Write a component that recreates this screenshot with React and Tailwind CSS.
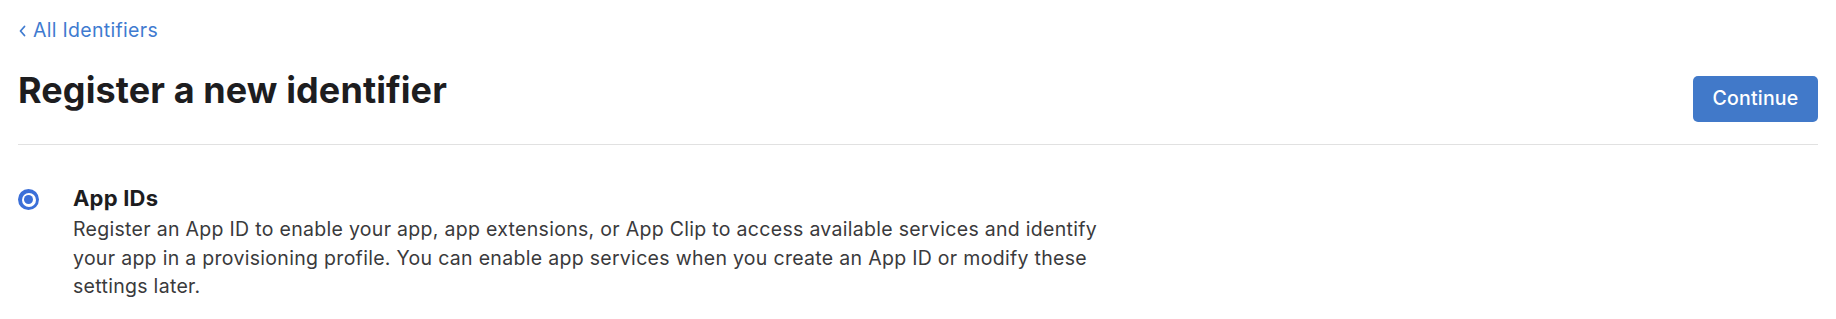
import React, { useState } from "react";

export default function App() {
  const [selected, setSelected] = useState("appids");

  return (
    <div className="min-h-screen bg-white px-[18px] font-['Inter','Liberation_Sans',sans-serif] text-[#1d1d1f]">
      {/* Back link */}
      <div className="pt-[16px]">
        <a href="#" className="inline-flex items-center gap-[6px] text-[19.5px] leading-[28px] tracking-[0.3px] text-[#3f7bd0]">
          <svg width="9" height="14" viewBox="0 0 9 14" fill="none" className="mt-[1px]">
            <path d="M6.5 2.5 2.5 7l4 4.5" stroke="currentColor" strokeWidth="1.8" strokeLinecap="round" strokeLinejoin="round" />
          </svg>
          All Identifiers
        </a>
      </div>

      {/* Header */}
      <div className="mt-[25px] flex items-start justify-between">
        <h1 className="text-[36px] font-bold leading-[43px] tracking-[0.1px] text-[#1d1d1f]">
          Register a new identifier
        </h1>
        <button className="mt-[7px] h-[46px] w-[125px] rounded-[5px] bg-[#4179c9] text-[19.5px] font-medium tracking-[0.2px] text-white">
          Continue
        </button>
      </div>

      <div className="mt-[22px] border-t border-[#e1e1e1]" />

      {/* Option */}
      <div className="mt-[40px] flex items-start">
        <button
          onClick={() => setSelected("appids")}
          className="mt-[4px] flex h-[21px] w-[21px] shrink-0 items-center justify-center rounded-full bg-[#3b6fd8]"
          aria-label="App IDs"
        >
          <span className="flex h-[14px] w-[14px] items-center justify-center rounded-full bg-white">
            {selected === "appids" && <span className="h-[9px] w-[9px] rounded-full bg-[#3b6fd8]" />}
          </span>
        </button>
        <div className="ml-[34px]">
          <h2 className="text-[22px] font-bold leading-[26px] tracking-[0.2px] text-[#1d1d1f]">App IDs</h2>
          <p className="mt-[4px] max-w-[1040px] text-[19.5px] leading-[28.5px] tracking-[0.3px] text-[#3a3a3c]">
            Register an App ID to enable your app, app extensions, or App Clip to access available services and identify your app in a provisioning profile. You can enable app services when you create an App ID or modify these settings later.
          </p>
        </div>
      </div>
    </div>
  );
}
